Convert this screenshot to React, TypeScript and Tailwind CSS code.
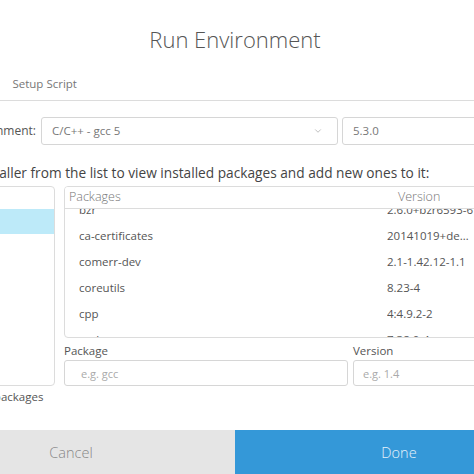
import { ChevronDown } from 'lucide-react';

const packages = [
  { name: 'bzr', version: '2.6.0+bzr6593-6' },
  { name: 'ca-certificates', version: '20141019+deb8u1' },
  { name: 'comerr-dev', version: '2.1-1.42.12-1.1' },
  { name: 'coreutils', version: '8.23-4' },
  { name: 'cpp', version: '4:4.9.2-2' },
  { name: 'curl', version: '7.38.0-4' },
];

const font = { fontFamily: '"Open Sans", "Liberation Sans", sans-serif' };

export default function App() {
  return (
    <div className="h-[474px] w-[474px] overflow-hidden bg-white" style={font}>
      <div className="ml-[-93px] flex w-[656px] flex-col">
        <h1 className="mt-[24px] text-center text-[22px] font-light leading-[30px] text-[#555]">Run Environment</h1>

        <div className="mt-[22px] flex gap-[36px] border-b border-[#dcdcdc] pb-[8px] pl-[20px] text-[11.5px] leading-[16px] text-[#777]">
          <span className="text-[#555]">Packages</span>
          <span>Setup Script</span>
        </div>

        <div className="mt-[16px] flex h-[28px] items-center px-[20px]">
          <label className="w-[109px] text-right text-[12px] text-[#555]">Environment:</label>
          <div className="ml-[5px] flex h-full w-[297px] items-center justify-between rounded-[3px] border border-[#d6d6d6] pl-[10px] pr-[14px] text-[11.5px] text-[#777]">
            <span>C/C++ - gcc 5</span>
            <ChevronDown className="h-[10px] w-[10px] text-[#999]" strokeWidth={1.5} />
          </div>
          <div className="ml-[4px] flex h-full flex-1 items-center rounded-[3px] border border-[#d6d6d6] pl-[10px] text-[11.5px] text-[#777]">
            5.3.0
          </div>
        </div>

        <p className="ml-[8px] mt-[18px] text-[13.7px] leading-[20px] text-[#444]">
          Select an installer from the list to view installed packages and add new ones to it:
        </p>

        <div className="mt-[3px] flex gap-[9px] px-[20px]">
          <div className="h-[200px] w-[128px] overflow-hidden rounded-[4px] border border-[#dcdcdc]">
            <div className="h-[22px]" />
            <div className="h-[25px] bg-[#bdeaf9]" />
          </div>

          <div className="flex flex-1 flex-col">
            <div className="h-[152px] overflow-hidden rounded-[4px] border border-[#dcdcdc]">
              <div className="relative z-10 flex h-[22px] items-center border-b border-[#dcdcdc] bg-white text-[12.5px] font-light text-[#777]">
                <span className="w-[333px] pl-[4px]">Packages</span>
                <span>Version</span>
              </div>
              <div className="mt-[-12px]">
                {packages.map((p) => (
                  <div key={p.name} className="flex h-[26px] items-center text-[11.5px] text-[#555]">
                    <span className="w-[322px] shrink-0 pl-[14px]">{p.name}</span>
                    <span className="w-[87px] truncate">{p.version}</span>
                  </div>
                ))}
              </div>
            </div>

            <div className="mt-[4px] flex gap-[5px] text-[11.5px] leading-[18px] text-[#555]">
              <span className="w-[284px]">Package</span>
              <span>Version</span>
            </div>
            <div className="flex h-[26px] gap-[5px]">
              <input
                placeholder="e.g. gcc"
                className="h-full w-[284px] rounded-[3px] border border-[#d6d6d6] pl-[16px] text-[11px] text-[#555] outline-none placeholder:text-[#aaa]"
              />
              <input
                placeholder="e.g. 1.4"
                className="h-full flex-1 rounded-[3px] border border-[#d6d6d6] pl-[9px] text-[11px] text-[#555] outline-none placeholder:text-[#aaa]"
              />
            </div>
          </div>
        </div>

        <div className="ml-[41px] mt-[2px] text-[11.5px] leading-[18px] text-[#555]">Manage packages</div>

        <div className="mt-[24px] flex h-[46px] text-[14.5px] font-light">
          <button className="flex-1 bg-[#e5e5e5] text-[#888]">Cancel</button>
          <button className="flex-1 bg-[#3498d8] text-[#e6f2fb]">Done</button>
        </div>
      </div>
    </div>
  );
}
